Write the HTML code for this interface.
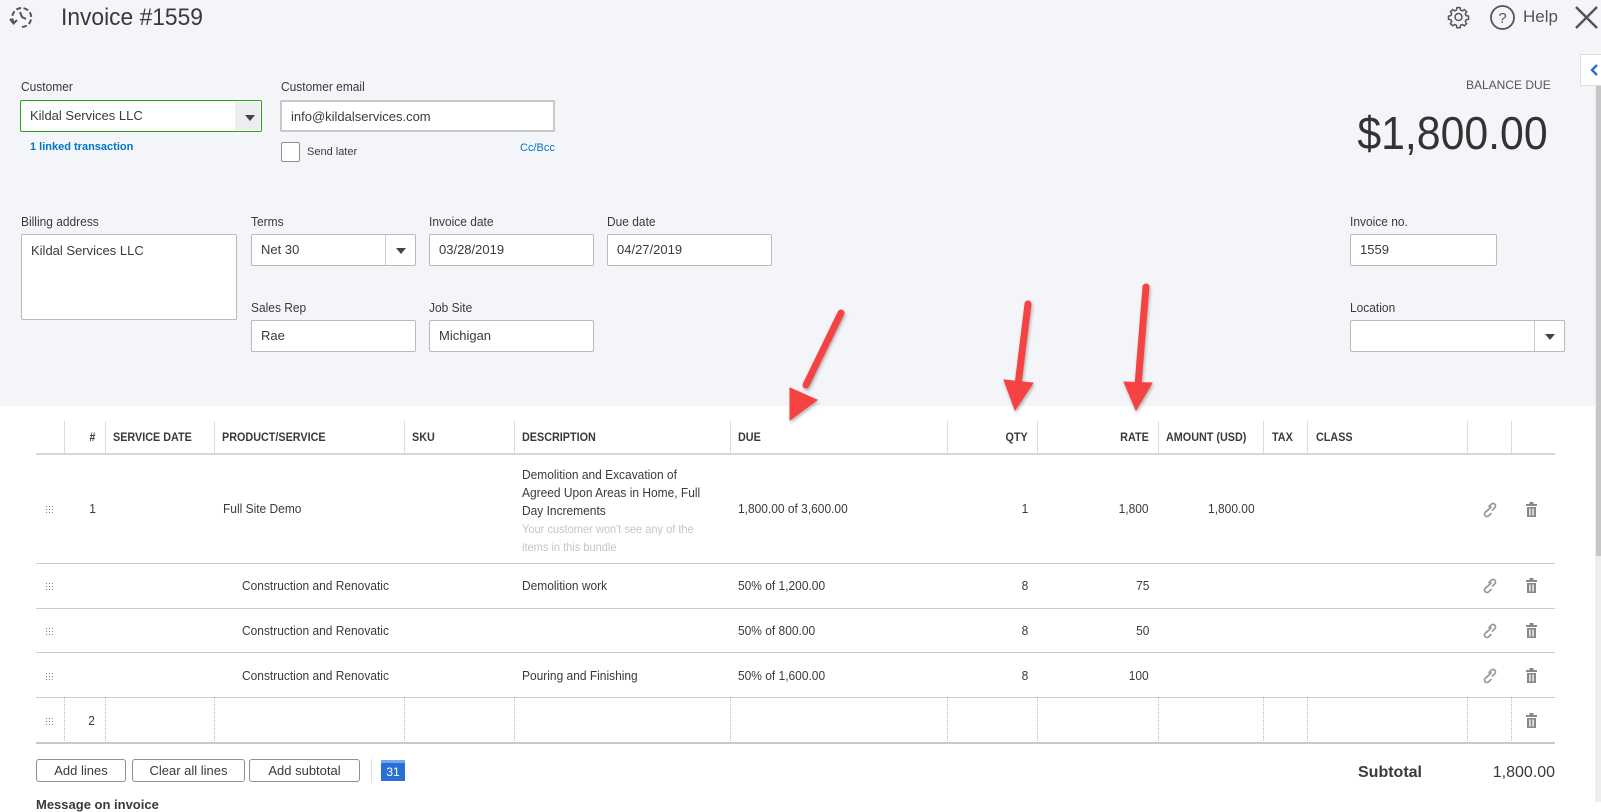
<!DOCTYPE html>
<html><head><meta charset="utf-8"><style>
*{box-sizing:border-box;margin:0;padding:0}
body{width:1601px;height:802px;overflow:hidden;position:relative;background:#fff;font-family:"Liberation Sans",sans-serif;color:#393a3d;font-size:13px}
.a{position:absolute;white-space:nowrap}
.top{position:absolute;left:0;top:0;width:1601px;height:406px;background:#f4f5f8}
.lbl{position:absolute;font-size:13px;color:#393a3d;transform:scaleX(.92);transform-origin:left}
.inp{position:absolute;background:#fff;border:1px solid #bababa;border-radius:2px;font-size:13px;padding-left:9px;color:#393a3d}
.dd{position:absolute;right:0;top:0;bottom:0;width:30px;border-left:1px solid #ccc}
.dd:after{content:"";position:absolute;left:10px;top:13px;border-left:5px solid transparent;border-right:5px solid transparent;border-top:6px solid #444}
.th{position:absolute;top:430px;font-size:12px;font-weight:bold;color:#393a3d;transform:scaleX(.9)}
.vl{position:absolute;top:421px;height:33px;width:1px;background:#ddd}
.hl{position:absolute;left:36px;width:1519px;height:1px;background:#ccc}
.td{position:absolute;font-size:13px;color:#393a3d;transform:scaleX(.92)}
.r{transform-origin:right}
.l{transform-origin:left}
.grip{position:absolute;left:45px;width:8px;height:8px;background-image:radial-gradient(#888 0.7px,transparent 0.8px);background-size:3px 3px}
.btn{position:absolute;top:759px;height:23px;border:1px solid #8d9096;border-radius:3px;background:#fff;font-size:13px;text-align:center;line-height:21px;color:#393a3d}
.dv{position:absolute;top:697px;height:46px;width:0;border-left:1px dotted #bbb}
</style></head><body>
<div class="top"></div>
<!-- header -->
<svg class="a" style="left:7px;top:4px" width="28" height="26" viewBox="0 0 28 26"><path d="M7 19 A9.5 9.5 0 1 1 15 23" fill="none" stroke="#555" stroke-width="2" stroke-dasharray="5 2.5"/><path d="M13 8l2 5 4 2" fill="none" stroke="#555" stroke-width="2"/><path d="M3 15l3.5 4.5 3.5-3.5" fill="none" stroke="#555" stroke-width="2"/></svg>
<div class="a" style="left:61px;top:4px;font-size:24px;color:#393a3d;transform:scaleX(.95);transform-origin:left">Invoice #1559</div>
<svg class="a" style="left:1446px;top:5px" width="25" height="24" viewBox="0 0 24 24"><path fill="none" stroke="#555" stroke-width="1.5" d="M12 2.5l1.6.2.5 2.4 1.7.8 2.1-1.3 2.2 2.2-1.3 2.1.8 1.7 2.4.5v3.2l-2.4.5-.8 1.7 1.3 2.1-2.2 2.2-2.1-1.3-1.7.8-.5 2.4h-3.2l-.5-2.4-1.7-.8-2.1 1.3-2.2-2.2 1.3-2.1-.8-1.7-2.4-.5v-3.2l2.4-.5.8-1.7-1.3-2.1 2.2-2.2 2.1 1.3 1.7-.8.5-2.4z"/><circle cx="12" cy="12" r="3.5" fill="none" stroke="#555" stroke-width="1.5"/></svg>
<svg class="a" style="left:1489px;top:4px" width="27" height="27" viewBox="0 0 27 27"><circle cx="13.5" cy="13.5" r="11.5" fill="none" stroke="#555" stroke-width="1.8"/><text x="13.5" y="19" text-anchor="middle" font-family="Liberation Sans" font-size="15" fill="#555">?</text></svg>
<div class="a" style="left:1523px;top:7px;font-size:17px;color:#555">Help</div>
<svg class="a" style="left:1574px;top:6px" width="25" height="24" viewBox="0 0 25 24"><path d="M2 1l21 21M23 1L2 22" stroke="#555" stroke-width="2.5"/></svg>
<div class="a" style="left:1580px;top:54px;width:22px;height:32px;background:#fff;border:1px solid #ddd;border-right:0"></div>
<svg class="a" style="left:1589px;top:63px" width="10" height="14" viewBox="0 0 10 14"><path d="M8 2L3 7l5 5" fill="none" stroke="#2c6ec9" stroke-width="2.4"/></svg>
<div class="a" style="left:1595px;top:86px;width:6px;height:716px;background:#eee"></div>
<div class="a" style="left:1596px;top:86px;width:5px;height:470px;background:#c6c6c6"></div>

<!-- customer -->
<div class="lbl" style="left:21px;top:79px">Customer</div>
<div class="inp" style="left:20px;top:100px;width:242px;height:32px;border-color:#2ca01c;line-height:30px">Kildal Services LLC<div class="dd" style="background:#ecedf0;border-left:0;top:1px;bottom:1px;right:1px;width:25px"></div></div>
<div class="a" style="left:30px;top:141px;font-size:11px;font-weight:bold;color:#0077c5">1 linked transaction</div>
<div class="lbl" style="left:281px;top:79px">Customer email</div>
<div class="inp" style="left:280px;top:100px;width:275px;height:32px;line-height:30px;border:2px solid #c8c8c8">info@kildalservices.com</div>
<div class="a" style="left:281px;top:142px;width:19px;height:20px;border:1px solid #8d9096;border-radius:2px;background:#fff"></div>
<div class="a" style="left:307px;top:146px;font-size:11px;color:#393a3d">Send later</div>
<div class="a" style="left:520px;top:142px;font-size:11px;color:#0077c5">Cc/Bcc</div>

<div class="a" style="left:1466px;top:78px;font-size:12px;color:#555">BALANCE DUE</div>
<div class="a" style="right:53px;top:106px;font-size:46px;color:#333;transform:scaleX(.93);transform-origin:right">$1,800.00</div>

<!-- address row -->
<div class="lbl" style="left:21px;top:214px">Billing address</div>
<div class="inp" style="left:21px;top:234px;width:216px;height:86px;padding-top:8px">Kildal Services LLC</div>
<div class="lbl" style="left:251px;top:214px">Terms</div>
<div class="inp" style="left:251px;top:234px;width:165px;height:32px;line-height:30px">Net 30<div class="dd"></div></div>
<div class="lbl" style="left:429px;top:214px">Invoice date</div>
<div class="inp" style="left:429px;top:234px;width:165px;height:32px;line-height:30px">03/28/2019</div>
<div class="lbl" style="left:607px;top:214px">Due date</div>
<div class="inp" style="left:607px;top:234px;width:165px;height:32px;line-height:30px">04/27/2019</div>
<div class="lbl" style="left:251px;top:300px">Sales Rep</div>
<div class="inp" style="left:251px;top:320px;width:165px;height:32px;line-height:30px">Rae</div>
<div class="lbl" style="left:429px;top:300px">Job Site</div>
<div class="inp" style="left:429px;top:320px;width:165px;height:32px;line-height:30px">Michigan</div>
<div class="lbl" style="left:1350px;top:214px">Invoice no.</div>
<div class="inp" style="left:1350px;top:234px;width:147px;height:32px;line-height:30px">1559</div>
<div class="lbl" style="left:1350px;top:300px">Location</div>
<div class="inp" style="left:1350px;top:320px;width:215px;height:32px"><div class="dd"></div></div>

<!-- table header -->
<div class="vl" style="left:64px"></div><div class="vl" style="left:105px"></div><div class="vl" style="left:214px"></div><div class="vl" style="left:404px"></div><div class="vl" style="left:514px"></div><div class="vl" style="left:730px"></div><div class="vl" style="left:947px"></div><div class="vl" style="left:1037px"></div><div class="vl" style="left:1158px"></div><div class="vl" style="left:1263px"></div><div class="vl" style="left:1307px"></div><div class="vl" style="left:1467px"></div><div class="vl" style="left:1511px"></div>
<div class="th" style="left:89px">#</div>
<div class="th l" style="left:113px">SERVICE DATE</div>
<div class="th l" style="left:222px">PRODUCT/SERVICE</div>
<div class="th l" style="left:412px">SKU</div>
<div class="th l" style="left:522px">DESCRIPTION</div>
<div class="th l" style="left:738px">DUE</div>
<div class="th r" style="right:573px">QTY</div>
<div class="th r" style="right:452px">RATE</div>
<div class="th l" style="left:1166px">AMOUNT (USD)</div>
<div class="th l" style="left:1272px">TAX</div>
<div class="th l" style="left:1316px">CLASS</div>
<div class="hl" style="top:453px;height:2px;background:#d4d7dc"></div>

<!-- row1 -->
<div class="grip" style="top:505px"></div>
<div class="td" style="left:89px;top:501px">1</div>
<div class="td l" style="left:223px;top:501px">Full Site Demo</div>
<div class="td l" style="left:522px;top:466px;line-height:18px">Demolition and Excavation of<br>Agreed Upon Areas in Home, Full<br>Day Increments</div>
<div class="td l" style="left:522px;top:520px;line-height:18px;font-size:12px;color:#c4c5c8">Your customer won't see any of the<br>items in this bundle</div>
<div class="td l" style="left:738px;top:501px">1,800.00 of 3,600.00</div>
<div class="td r" style="right:573px;top:501px">1</div>
<div class="td r" style="right:452px;top:501px">1,800</div>
<div class="td r" style="right:346px;top:501px">1,800.00</div>
<div class="hl" style="top:563px"></div>
<!-- row2-4 -->
<div class="grip" style="top:582px"></div>
<div class="td l" style="left:242px;top:578px">Construction and Renovatic</div>
<div class="td l" style="left:522px;top:578px">Demolition work</div>
<div class="td l" style="left:738px;top:578px">50% of 1,200.00</div>
<div class="td r" style="right:573px;top:578px">8</div>
<div class="td r" style="right:452px;top:578px">75</div>
<div class="hl" style="top:608px"></div>
<div class="grip" style="top:627px"></div>
<div class="td l" style="left:242px;top:623px">Construction and Renovatic</div>
<div class="td l" style="left:738px;top:623px">50% of 800.00</div>
<div class="td r" style="right:573px;top:623px">8</div>
<div class="td r" style="right:452px;top:623px">50</div>
<div class="hl" style="top:652px"></div>
<div class="grip" style="top:672px"></div>
<div class="td l" style="left:242px;top:668px">Construction and Renovatic</div>
<div class="td l" style="left:522px;top:668px">Pouring and Finishing</div>
<div class="td l" style="left:738px;top:668px">50% of 1,600.00</div>
<div class="td r" style="right:573px;top:668px">8</div>
<div class="td r" style="right:452px;top:668px">100</div>
<div class="hl" style="top:697px"></div>
<!-- row5 -->
<div class="dv" style="left:64px"></div><div class="dv" style="left:105px"></div><div class="dv" style="left:214px"></div><div class="dv" style="left:404px"></div><div class="dv" style="left:514px"></div><div class="dv" style="left:730px"></div><div class="dv" style="left:947px"></div><div class="dv" style="left:1037px"></div><div class="dv" style="left:1158px"></div><div class="dv" style="left:1263px"></div><div class="dv" style="left:1307px"></div><div class="dv" style="left:1467px"></div><div class="dv" style="left:1511px"></div>
<div class="grip" style="top:717px"></div>
<div class="td" style="left:88px;top:713px">2</div>
<div class="hl" style="top:742px;height:2px;background:#c8c8c8"></div>

<!-- icons -->
<svg width="0" height="0" style="position:absolute"><defs>
<g id="lk"><path d="M6 9.5L4 11.5a2.5 2.5 0 0 0 3.5 3.5L10 12.5M8 5.5L10.5 3a2.5 2.5 0 0 1 3.5 3.5L11.5 9M6 10l4-4" fill="none" stroke="#999" stroke-width="1.7" stroke-linecap="round"/></g>
<g id="tr"><rect x="0" y="2" width="11" height="2" fill="#888"/><rect x="3.5" y="0" width="4" height="2" fill="#888"/><rect x="1" y="5" width="9" height="10" fill="#888"/><rect x="3.3" y="6.5" width="1.3" height="7" fill="#fff"/><rect x="6.4" y="6.5" width="1.3" height="7" fill="#fff"/></g>
</defs></svg>
<svg class="a" style="left:1481px;top:501px" width="18" height="18"><use href="#lk"/></svg>
<svg class="a" style="left:1526px;top:502px" width="12" height="16"><use href="#tr"/></svg>
<svg class="a" style="left:1481px;top:577px" width="18" height="18"><use href="#lk"/></svg>
<svg class="a" style="left:1526px;top:578px" width="12" height="16"><use href="#tr"/></svg>
<svg class="a" style="left:1481px;top:622px" width="18" height="18"><use href="#lk"/></svg>
<svg class="a" style="left:1526px;top:623px" width="12" height="16"><use href="#tr"/></svg>
<svg class="a" style="left:1481px;top:667px" width="18" height="18"><use href="#lk"/></svg>
<svg class="a" style="left:1526px;top:668px" width="12" height="16"><use href="#tr"/></svg>
<svg class="a" style="left:1526px;top:713px" width="12" height="16"><use href="#tr"/></svg>

<!-- buttons -->
<div class="btn" style="left:36px;width:90px">Add lines</div>
<div class="btn" style="left:132px;width:113px">Clear all lines</div>
<div class="btn" style="left:249px;width:111px">Add subtotal</div>
<div class="a" style="left:371px;top:759px;width:1px;height:24px;background:#ddd"></div>
<div class="a" style="left:381px;top:760px;width:24px;height:21px;background:#2a6fd6;border-top:3px solid #7aa6e8;color:#fff;font-size:12px;text-align:center;line-height:18px">31</div>
<div class="a" style="left:1358px;top:764px;font-size:16px;font-weight:bold;color:#393a3d">Subtotal</div>
<div class="a" style="right:46px;top:764px;font-size:16px;color:#393a3d">1,800.00</div>
<div class="a" style="left:36px;top:797px;font-size:13px;font-weight:bold">Message on invoice</div>

<!-- arrows -->
<svg class="a" style="left:0;top:0" width="1601" height="802">
<defs><filter id="sh"><feDropShadow dx="1" dy="2" stdDeviation="1.5" flood-color="#000" flood-opacity=".3"/></filter></defs>
<g fill="#f54343" stroke="#f54343" filter="url(#sh)">
<path d="M841 313L806 385" stroke-width="7" stroke-linecap="round" fill="none"/>
<path d="M790 420L790 388L817 400Z" stroke-width="1"/>
<path d="M1028 304L1018 385" stroke-width="7" stroke-linecap="round" fill="none"/>
<path d="M1015 410L1004 380L1033 383Z" stroke-width="1"/>
<path d="M1146 287L1138 385" stroke-width="7" stroke-linecap="round" fill="none"/>
<path d="M1136 410L1124 382L1152 383Z" stroke-width="1"/>
</g></svg>
</body></html>
